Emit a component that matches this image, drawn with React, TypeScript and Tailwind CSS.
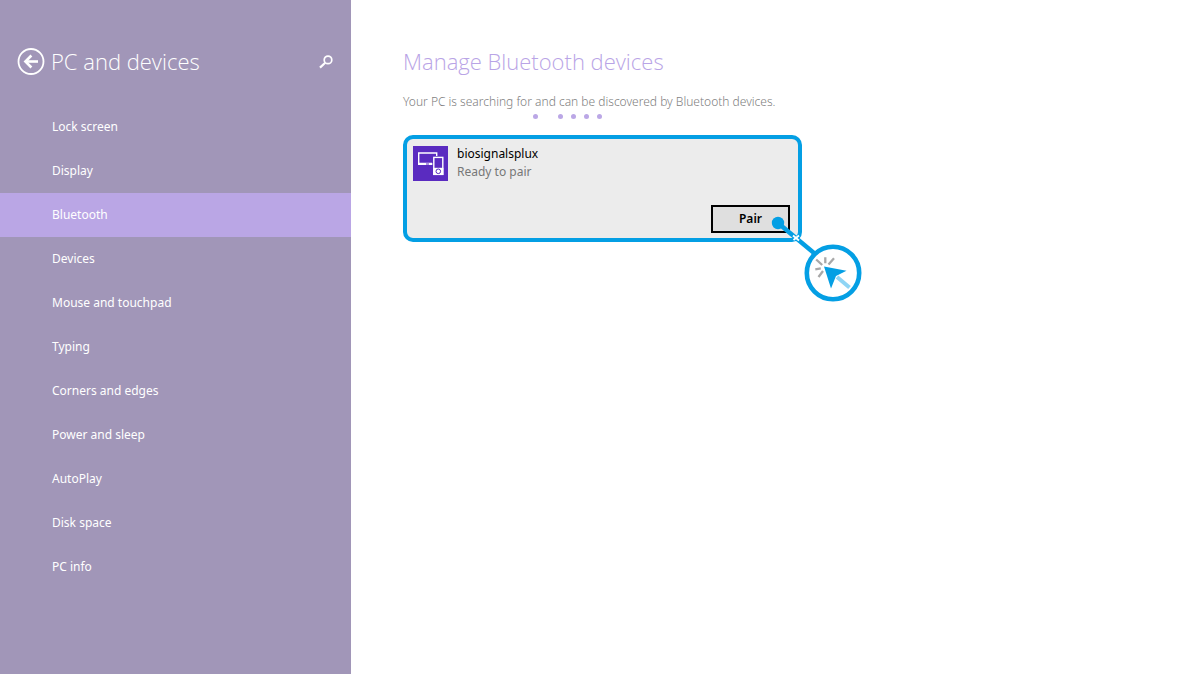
const items = [
  "Lock screen",
  "Display",
  "Bluetooth",
  "Devices",
  "Mouse and touchpad",
  "Typing",
  "Corners and edges",
  "Power and sleep",
  "AutoPlay",
  "Disk space",
  "PC info",
];

function BackIcon() {
  return (
    <svg viewBox="0 0 28 28" className="size-7" fill="none" stroke="currentColor" aria-hidden="true">
      <circle cx="14" cy="13.5" r="12.500" strokeWidth="1.800" />
      <path d="M8.500 13.500H21" strokeWidth="2.600" />
      <path d="M14.400 7.500L8.400 13.500l6 6" strokeWidth="2.600" />
    </svg>
  );
}

function SearchIcon() {
  return (
    <svg viewBox="0 0 14 14" className="size-3.5" fill="none" stroke="currentColor" aria-hidden="true">
      <circle cx="9" cy="4.9" r="3.8" strokeWidth="1.7" />
      <path d="M6.2 7.8L1 12.6" strokeWidth="2.2" />
    </svg>
  );
}

function DeviceIcon() {
  return (
    <svg viewBox="0 0 35 35" className="size-[35px] shrink-0 bg-[#5a2bc0]" fill="none" stroke="#fff" aria-hidden="true">
      <path d="M19 17.500H5.700V7h18v3" strokeWidth="1.400" />
      <path d="M5 18h14.300" strokeWidth="2" />
      <path d="M13 18h3" stroke="#5a2bc0" strokeWidth="1" />
      <rect x="20.800" y="11.400" width="9" height="17" strokeWidth="1.400" />
      <path d="M20.200 21.800h10.200V29H20.200z" fill="#fff" stroke="none" />
      <circle cx="25.300" cy="25.300" r="2.300" stroke="#5a2bc0" strokeWidth="1" />
    </svg>
  );
}

function ClickPointer() {
  return (
    <svg
      viewBox="0 0 94 88"
      className="pointer-events-none absolute -right-16 -bottom-[65px] h-[88px] w-[94px]"
      fill="none"
      aria-hidden="true"
    >
      <path d="M10 8L46 38" stroke="#049fe4" strokeWidth="4.4" />
      <path d="M25 20.500l6 5M25.500 25l5.500-4.500" stroke="#fff" strokeWidth="1.800" />
      <circle cx="10" cy="8" r="6.200" fill="#049fe4" />
      <circle cx="65" cy="58" r="26.200" fill="#fff" stroke="#049fe4" strokeWidth="4.600" />
      <path d="M69 62l12.500 10.500" stroke="#8fd5f5" strokeWidth="4" />
      <path d="M56 51.500l22.500 4.300-10.500 5.200-5 12.500z" fill="#049fe4" />
      <path
        d="M48.200 44.500l6 5.500M57.300 42.200v6M66 43.200l-5.500 6.300M47.300 54.300l5.500-1M50.500 62l4.500-6"
        stroke="#a8a8a8"
        strokeWidth="2.300"
      />
    </svg>
  );
}

export default function App() {
  return (
    <div className="flex min-h-screen bg-white font-['Noto_Sans','Open_Sans',sans-serif]">
      <aside className="w-[351px] shrink-0 bg-[#a196b8] text-white">
        <header className="flex h-[105px] items-center pt-[18px] pr-[18px] pb-0 pl-[17px]">
          <button type="button" aria-label="Back" className="shrink-0">
            <BackIcon />
          </button>
          <h1 className="ml-1.5 flex-1 font-['Open_Sans',sans-serif] text-[22px] font-light">PC and devices</h1>
          <button type="button" aria-label="Search">
            <SearchIcon />
          </button>
        </header>
        <nav>
          <ul>
            {items.map((item) => (
              <li key={item}>
                <a
                  href="#"
                  aria-current={item === "Bluetooth" ? "page" : undefined}
                  className={
                    item === "Bluetooth"
                      ? "flex h-11 items-center bg-[#baa6e5] pl-[52px] text-xs"
                      : "flex h-11 items-center pl-[52px] text-xs"
                  }
                >
                  {item}
                </a>
              </li>
            ))}
          </ul>
        </nav>
      </aside>

      <main className="flex-1 pt-[45px] pr-8 pl-[52px]">
        <h2 className="font-['Open_Sans',sans-serif] text-[22px] leading-8 font-light text-[#b9a4e6]">
          Manage Bluetooth devices
        </h2>
        <p className="mt-[15px] text-xs leading-5 font-light text-[#808080]">
          Your PC is searching for and can be discovered by Bluetooth devices.
        </p>
        <div className="mt-0.5 ml-[130px] flex gap-2" role="progressbar" aria-label="Searching">
          <span className="mr-3 size-[5px] rounded-full bg-[#bba7e6]" />
          <span className="size-[5px] rounded-full bg-[#bba7e6]" />
          <span className="size-[5px] rounded-full bg-[#bba7e6]" />
          <span className="size-[5px] rounded-full bg-[#bba7e6]" />
          <span className="size-[5px] rounded-full bg-[#bba7e6]" />
        </div>
        <section className="relative mt-4 w-full max-w-[399px] rounded-[10px] border-4 border-[#049fe4] bg-[#ececec] p-1.5 pb-[5px]">
          <div className="flex items-end gap-[9px]">
            <DeviceIcon />
            <div className="text-xs leading-[18px]">
              <h3 className="text-black">biosignalsplux</h3>
              <p className="text-[#777]">Ready to pair</p>
            </div>
          </div>
          <div className="mt-6 mr-0.5 flex justify-end">
            <button type="button" className="h-7 w-[79px] border-2 border-black bg-[#dfdfdf] text-xs font-semibold text-black">
              Pair
            </button>
          </div>
          <ClickPointer />
        </section>
      </main>
    </div>
  );
}
